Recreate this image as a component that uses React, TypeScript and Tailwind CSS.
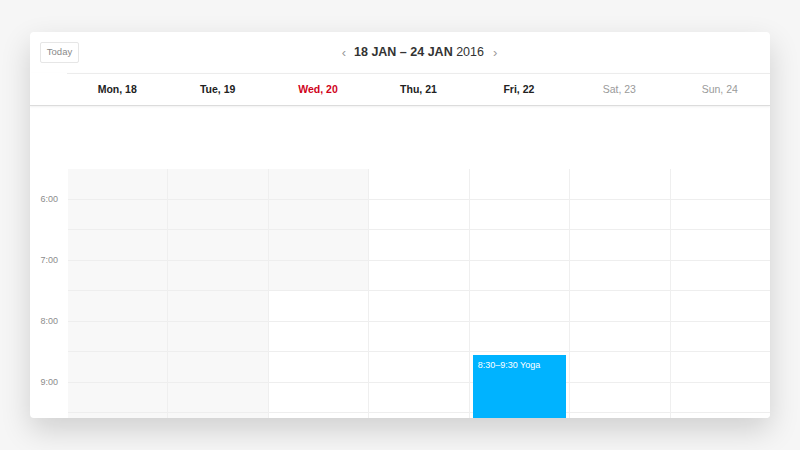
import React from "react";

const days = [
  { label: "Mon, 18", cls: "font-bold text-[#222]" },
  { label: "Tue, 19", cls: "font-bold text-[#222]" },
  { label: "Wed, 20", cls: "font-bold text-[#d0021b]" },
  { label: "Thu, 21", cls: "font-bold text-[#222]" },
  { label: "Fri, 22", cls: "font-bold text-[#222]" },
  { label: "Sat, 23", cls: "font-normal text-[#9a9a9a]" },
  { label: "Sun, 24", cls: "font-normal text-[#9a9a9a]" },
];

// number of shaded rows per column (from top)
const shaded = [99, 99, 4, 0, 0, 0, 0];
const rows = Array.from({ length: 10 }, (_, i) => i);

export default function App() {
  return (
    <div
      className="w-[800px] h-[450px] bg-[#f6f6f6] pt-[32px] px-[30px] overflow-hidden"
      style={{ fontFamily: '"Liberation Sans", Arial, sans-serif' }}
    >
      <div className="h-[386px] bg-white rounded-[4px] shadow-[0_12px_30px_rgba(0,0,0,0.16)] flex flex-col overflow-hidden">
        {/* top bar */}
        <div className="h-[41px] flex items-center px-[10px] relative shrink-0">
          <div className="w-[39px] h-[21px] border border-[#e6e6e6] rounded-[2px] flex items-center justify-center text-[9.5px] text-[#8a8a8a]">
            Today
          </div>
          <div className="flex-1 flex items-center justify-center pb-[1px]">
            <span className="text-[13px] text-[#999] mr-[8px] leading-none">‹</span>
            <span className="text-[12.5px] text-[#333] leading-none">
              <span className="font-bold">18 JAN – 24 JAN</span> 2016
            </span>
            <span className="text-[13px] text-[#999] ml-[9px] leading-none">›</span>
          </div>
        </div>
        {/* day header */}
        <div className="h-[33px] flex shrink-0 border-b border-[#dcdcdc] shadow-[0_1px_2px_rgba(0,0,0,0.06)] relative z-10">
          <div className="w-[37px] shrink-0" />
          <div className="flex-1 flex border-t border-[#ececec]">
            {days.map((d) => (
              <div
                key={d.label}
                className={`flex-1 flex items-center justify-center text-[10.5px] ${d.cls}`}
              >
                {d.label}
              </div>
            ))}
          </div>
        </div>
        {/* all-day blank area */}
        <div className="h-[63px] shrink-0" />
        {/* grid */}
        <div className="flex-1 flex overflow-hidden">
          <div className="w-[38px] shrink-0 pt-[25px] flex flex-col items-end pr-[10px]">
            {["6:00", "7:00", "8:00", "9:00"].map((t) => (
              <div key={t} className="h-[61px] shrink-0 text-[9px] leading-[11px] text-[#8c8c8c]">
                {t}
              </div>
            ))}
          </div>
          <div className="flex-1 flex">
            {days.map((d, ci) => (
              <div
                key={d.label}
                className={`flex-1 flex flex-col relative ${ci > 0 ? "border-l border-[#efefef]" : ""}`}
              >
                {rows.map((r) => (
                  <div
                    key={r}
                    className={`h-[30.5px] shrink-0 border-b border-[#eeeeee] ${
                      r < shaded[ci] ? "bg-[#f8f8f8]" : "bg-white"
                    }`}
                  />
                ))}
                {ci === 4 && (
                  <div className="absolute top-[186px] left-[3px] right-[3px] h-[80px] bg-[#00b3ff] px-[5px] pt-[4px] text-[9px] text-white">
                    8:30–9:30 Yoga
                  </div>
                )}
              </div>
            ))}
          </div>
        </div>
      </div>
    </div>
  );
}
